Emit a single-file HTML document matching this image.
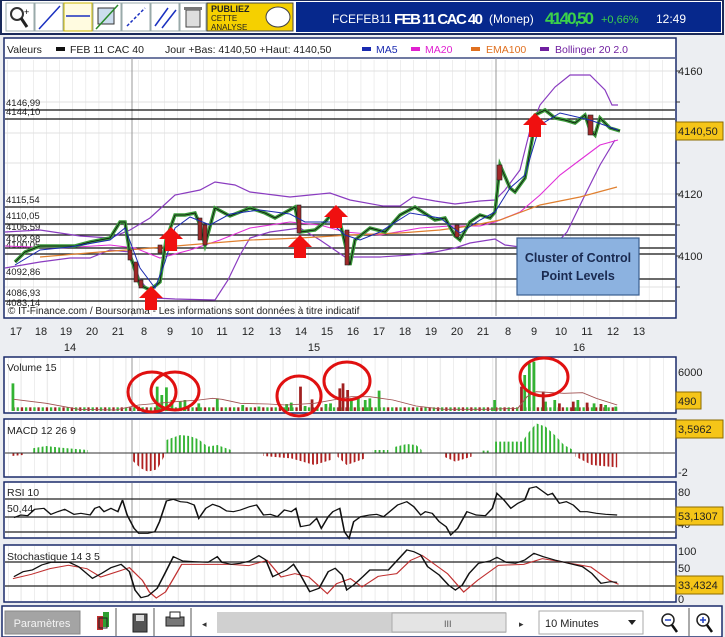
<!DOCTYPE html>
<html><head><meta charset="utf-8"><style>
*{margin:0;padding:0;box-sizing:border-box}
body{width:725px;height:637px;overflow:hidden;background:#eceef2;font-family:"Liberation Sans",sans-serif;position:relative}
svg text{font-family:"Liberation Sans",sans-serif}
</style></head><body>
<svg width="725" height="637" viewBox="0 0 725 637" xmlns="http://www.w3.org/2000/svg" style="position:absolute;left:0;top:0">
<defs>
<pattern id="grid" x="7" y="0" width="13.1" height="31" patternUnits="userSpaceOnUse"><line x1="0" y1="0" x2="0" y2="31" stroke="#dcdcdc" stroke-width="1"/></pattern>
<pattern id="vg" x="8" y="0" width="26.2" height="10" patternUnits="userSpaceOnUse"><line x1="0" y1="0" x2="0" y2="10" stroke="#dcdcdc"/><line x1="13.1" y1="0" x2="13.1" y2="10" stroke="#e6e6e6"/></pattern>
<pattern id="gs" x="0" y="0" width="9" height="400" patternUnits="userSpaceOnUse"><rect x="0" y="0" width="4" height="400" fill="#33b333"/></pattern>
<pattern id="rs" x="0" y="0" width="9" height="400" patternUnits="userSpaceOnUse"><rect x="0" y="0" width="4" height="400" fill="#b02020"/></pattern>
<pattern id="vb" x="0" y="0" width="18" height="400" patternUnits="userSpaceOnUse"><rect x="0" y="0" width="5" height="400" fill="#33b333"/><rect x="9" y="0" width="5" height="400" fill="#a02020"/></pattern>
</defs>
<!-- top toolbar -->
<rect x="1" y="0" width="722" height="34" fill="#ffffff" stroke="#1a2a5a" stroke-width="2"/>
<g fill="#fff" stroke="#9aa" stroke-width="1">
<rect x="6" y="3" width="28" height="28"/><rect x="35" y="3" width="28" height="28"/><rect x="64" y="3" width="28" height="28" fill="#fffbe0" stroke="#c8b400"/><rect x="93" y="3" width="28" height="28"/><rect x="122" y="3" width="28" height="28"/><rect x="151" y="3" width="28" height="28"/><rect x="180" y="3" width="26" height="28"/>
</g>
<circle cx="17" cy="14" r="6" fill="none" stroke="#333" stroke-width="2"/><line x1="21" y1="18" x2="27" y2="27" stroke="#222" stroke-width="3"/><text x="24" y="15" font-size="9">+</text>
<line x1="39" y1="29" x2="60" y2="6" stroke="#1a30c0" stroke-width="1.5"/>
<line x1="66" y1="16" x2="90" y2="16" stroke="#1a30c0" stroke-width="1.5"/>
<rect x="98" y="8" width="16" height="16" fill="#cde" stroke="#333"/><line x1="96" y1="29" x2="118" y2="5" stroke="#2a8a2a" stroke-width="1.5"/>
<line x1="127" y1="26" x2="145" y2="8" stroke="#1a30c0" stroke-dasharray="3 2" stroke-width="1.5"/>
<line x1="155" y1="26" x2="168" y2="8" stroke="#1a30c0" stroke-width="1.5"/><line x1="162" y1="28" x2="176" y2="10" stroke="#1a30c0" stroke-width="1.5"/>
<rect x="186" y="10" width="14" height="17" fill="#ddd" stroke="#444"/><rect x="184" y="7" width="18" height="3" fill="#777"/>
<rect x="207" y="3" width="86" height="28" fill="#f5d000" stroke="#444"/>
<text x="211" y="12" font-size="9" font-weight="bold" fill="#222">PUBLIEZ</text><text x="211" y="21" font-size="8" fill="#222">CETTE</text><text x="211" y="30" font-size="8" fill="#222">ANALYSE</text>
<ellipse cx="278" cy="17" rx="12" ry="10" fill="#fff" stroke="#444"/>
<rect x="296" y="2" width="425" height="30" fill="#06288c"/>
<text x="332" y="23" font-size="12" fill="#fff">FCEFEB11</text>
<text x="394" y="24" font-size="15" font-weight="bold" fill="#fff" textLength="89">FEB 11 CAC 40</text>
<text x="489" y="23" font-size="12" fill="#fff">(Monep)</text>
<text x="545" y="24" font-size="17" font-weight="bold" fill="#3bd04a" textLength="49">4140,50</text>
<text x="601" y="23" font-size="11" fill="#3bd04a">+0,66%</text>
<text x="656" y="23" font-size="12" fill="#fff">12:49</text>

<!-- main chart -->
<rect x="4" y="38" width="672" height="280" fill="#fff" stroke="#1a2a6a" stroke-width="1.5"/>
<rect x="5" y="60" width="670" height="256" fill="url(#grid)"/>
<g stroke="#e0e0e0"><line x1="5" y1="71" x2="675" y2="71"/><line x1="5" y1="102" x2="675" y2="102"/><line x1="5" y1="133" x2="675" y2="133"/><line x1="5" y1="163" x2="675" y2="163"/><line x1="5" y1="194" x2="675" y2="194"/><line x1="5" y1="225" x2="675" y2="225"/><line x1="5" y1="287" x2="675" y2="287"/></g>
<line x1="5" y1="58" x2="675" y2="58" stroke="#1a2a6a" stroke-width="1.2"/>
<line x1="132" y1="58" x2="132" y2="316" stroke="#999"/><line x1="496" y1="58" x2="496" y2="316" stroke="#999"/>
<text x="7" y="53" font-size="10.5" fill="#222">Valeurs</text>
<rect x="56" y="47" width="9" height="4" fill="#111"/><text x="70" y="53" font-size="10.5" fill="#222">FEB 11 CAC 40</text>
<text x="165" y="53" font-size="10.5" fill="#222">Jour +Bas: 4140,50 +Haut: 4140,50</text>
<rect x="362" y="47" width="9" height="4" fill="#1a2ab0"/><text x="376" y="53" font-size="10.5" fill="#1a2ab0">MA5</text>
<rect x="411" y="47" width="9" height="4" fill="#e020d0"/><text x="425" y="53" font-size="10.5" fill="#e020d0">MA20</text>
<rect x="471" y="47" width="9" height="4" fill="#e07020"/><text x="486" y="53" font-size="10.5" fill="#e07020">EMA100</text>
<rect x="540" y="47" width="9" height="4" fill="#7020a0"/><text x="555" y="53" font-size="10.5" fill="#7020a0">Bollinger 20 2.0</text>
<g stroke="#111" stroke-width="1.3">
<line x1="5" y1="110" x2="675" y2="110"/><line x1="5" y1="119" x2="675" y2="119"/><line x1="5" y1="207" x2="675" y2="207"/><line x1="5" y1="224" x2="675" y2="224"/><line x1="5" y1="235" x2="675" y2="235"/><line x1="5" y1="248" x2="675" y2="248"/><line x1="5" y1="254" x2="675" y2="254"/><line x1="5" y1="279" x2="675" y2="279"/><line x1="5" y1="301" x2="675" y2="301"/>
</g>
<g font-size="9.5" fill="#222">
<text x="6" y="106">4146,99</text><text x="6" y="115">4144,10</text><text x="6" y="203">4115,54</text><text x="6" y="219">4110,05</text><text x="6" y="230">4106,59</text><text x="6" y="242">4102,98</text><text x="6" y="248">4100,05</text><text x="6" y="275">4092,86</text><text x="6" y="296">4086,93</text><text x="6" y="306">4083,14</text>
</g>
<polyline fill="none" stroke="#8a3cc0" stroke-width="1.2" points="5,232 40,230 80,236 110,238 130,230 150,218 175,195 200,190 215,182 235,185 250,192 290,197 330,193 350,200 383,206 400,206 413,197 435,201 455,204 480,201 495,200 505,190 520,170 530,130 540,105 555,87 570,75 590,75 605,90 612,105 618,105"/>
<polyline fill="none" stroke="#8a3cc0" stroke-width="1.2" points="5,268 40,262 70,258 90,258 110,250 130,252 140,280 155,298 175,299 215,300 228,280 240,255 250,238 270,232 300,228 320,240 345,257 380,257 410,255 435,252 455,248 470,243 495,239 505,245 520,247 550,250 567,232 585,195 600,165 615,140"/>
<polyline fill="none" stroke="#e030d8" stroke-width="1.1" points="5,246 60,248 110,245 135,248 160,258 190,250 220,240 250,228 290,222 320,225 345,232 380,235 420,228 450,226 480,226 495,222 520,212 540,195 560,175 580,160 600,145 618,140"/>
<polyline fill="none" stroke="#e08030" stroke-width="1.2" points="40,257 100,252 140,249 200,244 250,240 300,238 350,235 400,233 440,230 470,226 500,220 540,205 580,197 617,187"/>
<polyline fill="none" stroke="#3a9a3a" stroke-width="3.5" points="15,262 25,252 40,246 55,246 75,246 90,242 110,238 120,222 125,222 130,255 140,285 150,290 160,282 166,240 175,215 185,215 195,213 200,225 205,245 215,208 230,216 250,208 265,213 275,218 295,207 300,232 315,230 325,222 335,210 340,222 350,265 355,240 370,228 385,232 400,215 415,207 435,220 445,218 455,236 460,240 470,222 480,215 490,218 495,212 500,165 510,188 515,192 525,178 532,140 535,115 545,110 555,118 565,120 575,123 585,115 590,130 595,135 600,118 610,128 620,131"/>
<polyline fill="none" stroke="#111" stroke-width="0.8" points="15,262 25,252 40,246 55,246 75,246 90,242 110,238 120,222 125,222 130,255 140,285 150,290 160,282 166,240 175,215 185,215 195,213 200,225 205,245 215,208 230,216 250,208 265,213 275,218 295,207 300,232 315,230 325,222 335,210 340,222 350,265 355,240 370,228 385,232 400,215 415,207 435,220 445,218 455,236 460,240 470,222 480,215 490,218 495,212 500,165 510,188 515,192 525,178 532,140 535,115 545,110 555,118 565,120 575,123 585,115 590,130 595,135 600,118 610,128 620,131"/>
<g fill="#a02828" stroke="#222" stroke-width="0.6">
<rect x="128" y="250" width="4" height="10"/><rect x="134" y="262" width="4" height="20"/><rect x="139" y="280" width="4" height="8"/><rect x="198" y="218" width="4" height="22"/><rect x="203" y="225" width="4" height="20"/><rect x="297" y="205" width="4" height="28"/><rect x="345" y="230" width="4" height="35"/><rect x="497" y="165" width="5" height="15"/><rect x="588" y="115" width="5" height="20"/><rect x="158" y="245" width="4" height="8"/><rect x="455" y="225" width="4" height="12"/></g>
<polyline fill="none" stroke="#1a2ab0" stroke-width="1" points="15,265 40,250 70,247 110,240 125,228 140,268 155,288 165,262 175,228 190,217 210,225 230,214 260,210 290,214 305,222 330,222 345,235 360,240 380,232 410,213 440,218 460,233 480,220 495,212 510,188 525,175 540,125 560,113 590,120 618,130"/>
<text x="8" y="314" font-size="10" fill="#222">© IT-Finance.com / Boursorama - Les informations sont données à titre indicatif</text>
<g fill="#f01010">
<path d="M151 286 L163 298 L157 298 L157 310 L145 310 L145 298 L139 298Z"/>
<path d="M171 227 L183 239 L177 239 L177 251 L165 251 L165 239 L159 239Z"/>
<path d="M300 235 L312 247 L306 247 L306 258 L294 258 L294 247 L288 247Z"/>
<path d="M336 205 L348 217 L342 217 L342 228 L330 228 L330 217 L324 217Z"/>
<path d="M535 113 L547 125 L541 125 L541 137 L529 137 L529 125 L523 125Z"/>
</g>
<rect x="517" y="238" width="122" height="57" fill="#8cb2e0" stroke="#3a5e90" stroke-width="1.2"/>
<text x="578" y="262" font-size="12.5" font-weight="bold" fill="#1a2a50" text-anchor="middle">Cluster of Control</text>
<text x="578" y="280" font-size="12.5" font-weight="bold" fill="#1a2a50" text-anchor="middle">Point Levels</text>
<g stroke="#333"><line x1="676" y1="71" x2="680" y2="71"/><line x1="676" y1="102" x2="680" y2="102"/><line x1="676" y1="163" x2="680" y2="163"/><line x1="676" y1="194" x2="680" y2="194"/><line x1="676" y1="225" x2="680" y2="225"/><line x1="676" y1="256" x2="680" y2="256"/><line x1="676" y1="287" x2="680" y2="287"/></g>
<g font-size="11" fill="#222"><text x="678" y="75">4160</text><text x="678" y="198">4120</text><text x="678" y="260">4100</text></g>
<rect x="676" y="122" width="47" height="18" fill="#f5c518" stroke="#8a6a00"/><text x="678" y="135" font-size="11" fill="#222">4140,50</text>
<g font-size="11" fill="#222" text-anchor="middle">
<text x="16" y="335">17</text><text x="41" y="335">18</text><text x="66" y="335">19</text><text x="92" y="335">20</text><text x="118" y="335">21</text><text x="144" y="335">8</text><text x="170" y="335">9</text><text x="197" y="335">10</text><text x="222" y="335">11</text><text x="248" y="335">12</text><text x="275" y="335">13</text><text x="301" y="335">14</text><text x="327" y="335">15</text><text x="353" y="335">16</text><text x="379" y="335">17</text><text x="405" y="335">18</text><text x="431" y="335">19</text><text x="457" y="335">20</text><text x="483" y="335">21</text><text x="508" y="335">8</text><text x="534" y="335">9</text><text x="561" y="335">10</text><text x="587" y="335">11</text><text x="613" y="335">12</text><text x="639" y="335">13</text>
<text x="70" y="351">14</text><text x="314" y="351">15</text><text x="579" y="351">16</text></g>

<rect x="4" y="357" width="672" height="56" fill="#fff" stroke="#1a2a6a" stroke-width="1.5"/>
<rect x="5" y="358" width="670" height="54" fill="url(#vg)"/>
<line x1="132" y1="358" x2="132" y2="412" stroke="#999"/><line x1="496" y1="358" x2="496" y2="412" stroke="#999"/>
<text x="7" y="371" font-size="10.5" fill="#222">Volume 15</text>
<g transform="translate(0,350) scale(0.4623,0.3333)">
<rect x="30" y="172" width="1305" height="11" fill="url(#vb)"/>
<path d="M28 183V100M340 183V110M350 183V135M360 183V112M372 183V150M390 183V155M400 183V150M430 183V160M470 183V145M525 183V165M560 183V170M620 183V162M630 183V158M660 183V168M705 183V162M715 183V160M760 183V145M775 183V140M790 183V150M800 183V145M820 183V122M1070 183V150M1135 183V75M1145 183V40M1155 183V35M1180 183V155M1200 183V150M1250 183V150M1285 183V160M1310 183V165M1332 183V170" stroke="#33b333" stroke-width="6"/>
<path d="M300 183V170M650 183V110M675 183V148M735 183V115M742 183V100M752 183V120M1128 183V110M1175 183V125M1210 183V160M1240 183V155M1270 183V158M1300 183V162" stroke="#a02020" stroke-width="6"/>
<polyline fill="none" stroke="#a05050" stroke-width="2.5" points="30,148 100,160 170,178 250,180 300,165 380,155 430,150 460,145 480,148 520,160 580,162 620,165 680,160 720,150 760,140 800,140 850,150 900,168 960,178 1050,178 1120,175 1140,140 1160,125 1220,130 1260,128 1290,145 1335,165"/>
</g>
<g fill="none" stroke="#e01010" stroke-width="3">
<ellipse cx="152" cy="392" rx="24" ry="20"/><ellipse cx="175" cy="391" rx="24" ry="19"/><ellipse cx="299" cy="396" rx="22" ry="20"/><ellipse cx="347" cy="381" rx="23" ry="19"/><ellipse cx="544" cy="377" rx="24" ry="19"/>
</g>
<text x="678" y="376" font-size="11" fill="#222">6000</text>
<rect x="676" y="392" width="25" height="17" fill="#f5c518" stroke="#8a6a00"/><text x="678" y="405" font-size="11" fill="#222">490</text>

<rect x="4" y="419" width="672" height="58" fill="#fff" stroke="#1a2a6a" stroke-width="1.5"/>
<rect x="5" y="420" width="670" height="56" fill="url(#vg)"/>
<line x1="132" y1="420" x2="132" y2="476" stroke="#999"/><line x1="496" y1="420" x2="496" y2="476" stroke="#999"/>
<text x="7" y="434" font-size="10.5" fill="#222">MACD 12 26 9</text>
<g transform="translate(0,350) scale(0.4623,0.3333)">
<path fill="url(#gs)" d="M70 310V295L100 288L130 293L190 300V310Z M360 310V270L375 262L390 255L410 258L430 268L440 280L450 290L470 285L490 295L500 300V310Z M805 310V300L840 300V310Z M850 310V292L880 282L900 285L912 300V310Z M1040 310V302L1062 302V310Z M1070 310V275L1130 275L1145 245L1160 220L1180 230L1200 255L1220 285L1240 300V310Z"/>
<path fill="url(#rs)" d="M25 310V318L50 315V310Z M285 310V330L305 355L320 365L340 358L355 320V310Z M570 310V318L630 325L680 345L715 330V310Z M730 310V320L750 345L790 325V310Z M960 310V320L985 335L1020 320V310Z M1245 310V320L1280 345L1335 352V310Z"/>
</g>
<line x1="5" y1="453" x2="675" y2="453" stroke="#333"/>
<rect x="676" y="420" width="47" height="18" fill="#f5c518" stroke="#8a6a00"/><text x="678" y="433" font-size="11" fill="#222">3,5962</text>
<text x="678" y="476" font-size="11" fill="#222">-2</text>

<rect x="4" y="482" width="672" height="56" fill="#fff" stroke="#1a2a6a" stroke-width="1.5"/>
<rect x="5" y="483" width="670" height="54" fill="url(#vg)"/>
<line x1="132" y1="483" x2="132" y2="537" stroke="#999"/><line x1="496" y1="483" x2="496" y2="537" stroke="#999"/>
<g stroke="#222" stroke-width="1.2"><line x1="5" y1="499" x2="675" y2="499"/><line x1="5" y1="517" x2="675" y2="517"/><line x1="5" y1="532" x2="675" y2="532"/></g>
<text x="7" y="496" font-size="10.5" fill="#222">RSI 10</text><text x="7" y="512" font-size="10.5" fill="#222">50,44</text>
<g transform="translate(0,475) scale(0.4623,0.3333)">
<polyline fill="none" stroke="#111" stroke-width="3.5" points="30,128 45,120 60,122 75,103 95,100 110,118 125,110 140,103 160,118 175,115 195,120 205,100 215,95 225,110 240,100 255,110 265,75 275,120 290,160 300,175 320,175 335,170 345,140 360,78 375,73 390,80 405,82 420,90 430,130 445,100 460,88 475,95 490,108 505,110 520,105 540,95 555,90 570,120 585,118 600,125 615,105 630,110 640,100 650,155 670,150 685,130 695,160 710,125 720,110 735,100 745,170 755,190 765,140 780,125 800,120 815,118 830,125 860,90 880,80 895,95 910,120 920,110 935,115 950,140 965,155 975,180 990,160 1010,110 1030,120 1050,122 1065,100 1075,55 1090,75 1105,100 1120,85 1135,75 1145,40 1160,35 1170,45 1185,60 1195,55 1210,85 1225,80 1240,90 1255,110 1270,110 1290,115 1310,118 1335,120"/>
</g>
<g font-size="11" fill="#222"><text x="678" y="496">80</text><text x="678" y="528">40</text></g>
<rect x="676" y="507" width="47" height="18" fill="#f5c518" stroke="#8a6a00"/><text x="678" y="520" font-size="11" fill="#222">53,1307</text>

<rect x="4" y="545" width="672" height="57" fill="#fff" stroke="#1a2a6a" stroke-width="1.5"/>
<rect x="5" y="546" width="670" height="55" fill="url(#vg)"/>
<line x1="132" y1="546" x2="132" y2="601" stroke="#999"/><line x1="496" y1="546" x2="496" y2="601" stroke="#999"/>
<g stroke="#222" stroke-width="1.2"><line x1="5" y1="562" x2="675" y2="562"/><line x1="5" y1="586" x2="675" y2="586"/></g>
<text x="7" y="560" font-size="10.5" fill="#222">Stochastique 14 3 5</text>
<g transform="translate(0,475) scale(0.4623,0.3333)">
<polyline fill="none" stroke="#c03030" stroke-width="3" transform="translate(18,6)" points="10,305 50,292 90,275 130,265 170,275 200,300 240,282 262,272 290,310 305,345 320,363 340,345 355,310 375,262 395,262 450,262 480,262 520,266 560,250 590,300 620,290 650,300 690,350 710,320 740,305 765,330 800,298 840,290 870,250 895,235 925,265 950,290 985,345 1015,310 1060,265 1115,262 1155,245 1200,255 1260,270 1300,310 1320,322"/>
<polyline fill="none" stroke="#111" stroke-width="3.5" points="30,305 50,290 70,285 90,270 110,262 130,262 150,262 170,275 200,310 220,295 240,278 262,268 280,290 292,345 305,368 320,363 340,340 355,300 375,245 395,258 420,260 450,262 470,245 480,262 500,268 520,265 540,258 560,242 575,255 590,305 605,295 620,285 635,268 650,300 670,350 690,340 710,290 725,280 740,300 750,345 765,330 785,305 800,285 820,285 840,285 860,255 880,225 895,230 910,240 925,275 950,300 970,330 985,345 1000,330 1015,295 1035,265 1060,258 1075,247 1095,262 1115,265 1135,255 1155,235 1175,245 1200,255 1230,265 1260,275 1280,295 1300,325 1320,320 1335,322"/>
</g>
<g font-size="11" fill="#222"><text x="678" y="555">100</text><text x="678" y="572">50</text><text x="678" y="603">0</text></g>
<rect x="676" y="576" width="47" height="18" fill="#f5c518" stroke="#8a6a00"/><text x="678" y="589" font-size="11" fill="#222">33,4324</text>

<rect x="2" y="606" width="720" height="31" fill="#fff" stroke="#1a2a6a" stroke-width="1.5"/>
<rect x="5" y="611" width="75" height="23" fill="#a4a4a4" stroke="#888"/>
<text x="42" y="627" font-size="11" fill="#f4f4f4" text-anchor="middle">Paramètres</text>
<rect x="97" y="616" width="6" height="14" fill="#c03030"/><rect x="103" y="612" width="6" height="15" fill="#30a030"/><rect x="99" y="618" width="8" height="10" fill="none" stroke="#222"/>
<line x1="116" y1="608" x2="116" y2="636" stroke="#555"/>
<rect x="133" y="614" width="14" height="18" fill="#555" stroke="#222"/><rect x="136" y="615" width="8" height="6" fill="#ddd"/>
<line x1="154" y1="608" x2="154" y2="636" stroke="#555"/>
<rect x="166" y="617" width="18" height="9" fill="#777" stroke="#222"/><rect x="170" y="612" width="10" height="6" fill="#fff" stroke="#222"/>
<line x1="191" y1="608" x2="191" y2="636" stroke="#555"/>
<text x="202" y="627" font-size="9" fill="#333">◂</text>
<rect x="217" y="612" width="289" height="21" fill="#d0d0d0"/>
<rect x="392" y="613" width="114" height="19" fill="#e4e4e4" stroke="#aaa"/>
<text x="444" y="627" font-size="9" fill="#555">III</text>
<text x="519" y="627" font-size="9" fill="#333">▸</text>
<rect x="539" y="611" width="104" height="23" fill="#fff" stroke="#aaa"/>
<text x="545" y="627" font-size="11" fill="#222">10 Minutes</text>
<path d="M628 620 L636 620 L632 625Z" fill="#222"/>
<circle cx="668" cy="620" r="6" fill="#fff" stroke="#222" stroke-width="1.5"/><line x1="665" y1="620" x2="671" y2="620" stroke="#2040c0" stroke-width="1.5"/><line x1="672" y1="625" x2="677" y2="632" stroke="#111" stroke-width="2.5"/>
<line x1="689" y1="608" x2="689" y2="636" stroke="#555"/>
<circle cx="703" cy="620" r="6" fill="#fff" stroke="#222" stroke-width="1.5"/><line x1="700" y1="620" x2="706" y2="620" stroke="#2040c0" stroke-width="1.5"/><line x1="703" y1="617" x2="703" y2="623" stroke="#2040c0" stroke-width="1.5"/><line x1="707" y1="625" x2="712" y2="632" stroke="#111" stroke-width="2.5"/>
</svg>
</body></html>
